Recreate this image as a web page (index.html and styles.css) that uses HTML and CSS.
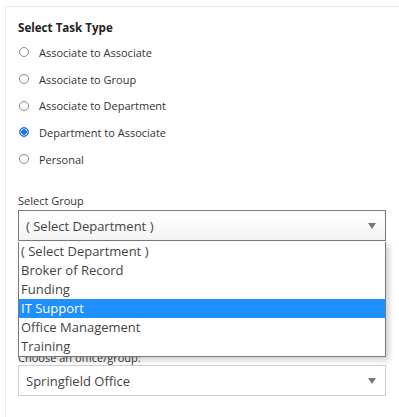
FILE: index.html
```html
<!DOCTYPE html>
<html>
<head>
<meta charset="utf-8">
<link rel="stylesheet" href="styles.css">
</head>
<body>
<div class="panel">
  <h3 class="title">Select Task Type</h3>
  <div class="radios">
    <div class="radio"><span class="dot"></span><span>Associate to Associate</span></div>
    <div class="radio"><span class="dot"></span><span>Associate to Group</span></div>
    <div class="radio"><span class="dot"></span><span>Associate to Department</span></div>
    <div class="radio"><span class="dot on"></span><span>Department to Associate</span></div>
    <div class="radio"><span class="dot"></span><span>Personal</span></div>
  </div>
  <div class="field">
    <div class="label">Select Group</div>
    <div class="selwrap">
      <div class="select open"><span>( Select Department )</span><span class="arrow"></span></div>
      <ul class="list">
        <li>( Select Department )</li>
        <li>Broker of Record</li>
        <li>Funding</li>
        <li class="hl">IT Support</li>
        <li>Office Management</li>
        <li>Training</li>
      </ul>
    </div>
  </div>
  <div class="field second">
    <div class="label">Choose an office/group:</div>
    <div class="select"><span>Springfield Office</span><span class="arrow"></span></div>
  </div>
</div>
</body>
</html>
```
FILE: styles.css
```css
* { box-sizing: border-box; }
html, body { margin: 0; padding: 0; background: #fff; }
body {
  font-family: "Open Sans", "Liberation Sans", sans-serif;
  color: #333;
  padding: 6px 0 0 5px;
  height: 417px;
  overflow: hidden;
}
.panel {
  border-left: 1px solid #e8e8e8;
  border-top: 1px solid #e8e8e8;
  padding: 11px 13px 0 12px;
  height: 411px;
}
.title {
  margin: 0;
  font-size: 11.6px;
  font-weight: 700;
  color: #222;
  line-height: 20px;
}
.radios { display: flex; flex-direction: column; margin-top: 1px; }
.radio {
  display: flex;
  align-items: center;
  height: 26.7px;
  font-size: 11px;
  color: #333;
}
.dot {
  width: 10px; height: 10px;
  border: 1px solid #8a8a8a;
  border-radius: 50%;
  margin: 0 10px 0 1px;
  background: #fff;
  flex: none;
}
.dot.on {
  border-color: #1a73e8;
  background: radial-gradient(circle, #1a73e8 0 2.6px, #fff 3px 3.4px, #1a73e8 3.8px);
}
.field { margin-top: 21px; }
.label { font-size: 11px; line-height: 15px; color: #333; }
.selwrap { position: relative; }
.select {
  margin-top: 2px;
  height: 31px;
  border: 1px solid #cfcfcf;
  background: #fff;
  display: flex;
  align-items: center;
  justify-content: space-between;
  padding: 0 9px 0 7px;
  font-size: 13px;
  color: #444;
}
.select.open {
  border-color: #7a7a7a;
  background: linear-gradient(#fff, #f3f3f3);
}
.arrow {
  width: 0; height: 0;
  border-left: 4px solid transparent;
  border-right: 4px solid transparent;
  border-top: 6px solid #777;
}
.list {
  position: absolute;
  left: 0; right: 0; top: 32px;
  margin: 0; padding: 0;
  list-style: none;
  border: 1px solid #7a7a7a;
  border-top: none;
  background: #fff;
  box-shadow: 3px 3px 6px rgba(0,0,0,0.2);
  z-index: 2;
}
.list li {
  height: 19px;
  line-height: 19px;
  font-size: 13px;
  padding-left: 2px;
  color: #444;
}
.list li.hl { background: #1e90ff; color: #fff; }
.second { margin-top: 109px; }
.second .select { margin-top: 0; }
```
